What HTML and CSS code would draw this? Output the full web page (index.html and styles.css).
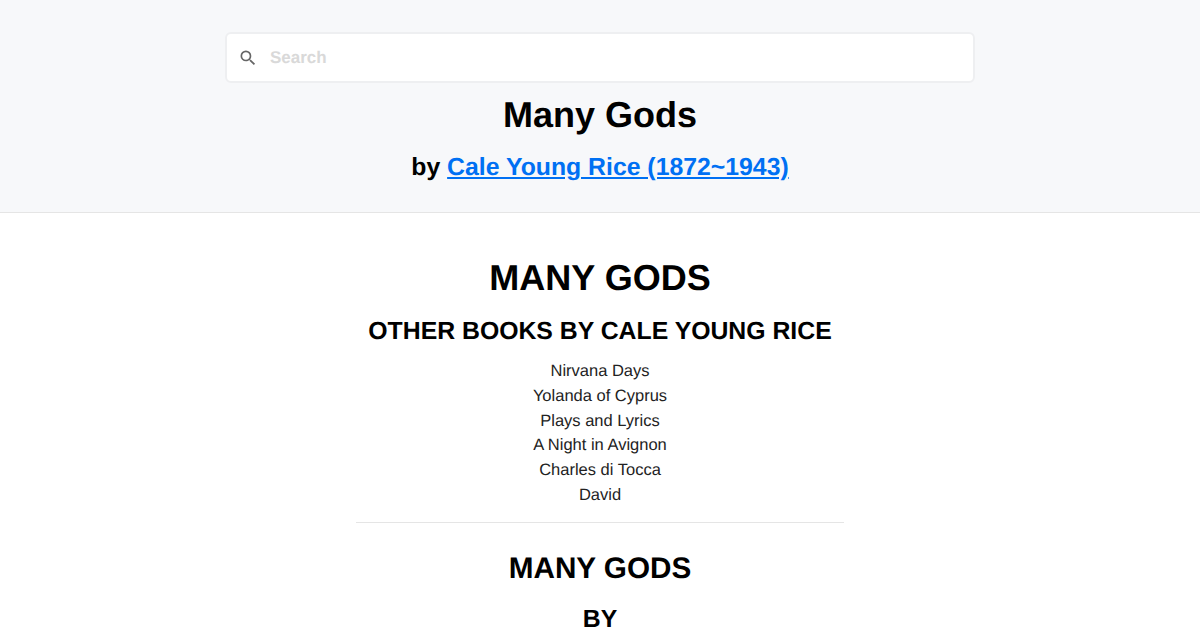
FILE: index.html
```html
<!DOCTYPE html>
<html>
<head>
    <meta charset="UTF-8">
    <meta name="viewport" content="width=device-width, initial-scale=1.0">
    <title>Many Gods</title>
    <link rel="stylesheet" href="styles.css">
</head>
<body>
    <header class="page-header">
        <div class="search-box">
            <svg class="search-icon" viewBox="0 0 24 24" width="20" height="20"><path d="M15.5 14h-.79l-.28-.27A6.47 6.47 0 0 0 16 9.5 6.5 6.5 0 1 0 9.5 16c1.61 0 3.09-.59 4.23-1.57l.27.28v.79l5 4.99L20.49 19l-4.99-5zm-6 0C7.01 14 5 11.99 5 9.5S7.01 5 9.5 5 14 7.01 14 9.5 11.99 14 9.5 14z"/></svg>
            <input class="search-input" type="text" placeholder="Search">
        </div>
        <h1 class="book-title">Many Gods</h1>
        <p class="book-author">by <a href="#">Cale Young Rice (1872~1943)</a></p>
    </header>
    <main class="book-text">
        <h1>MANY GODS</h1>
        <h2>OTHER BOOKS BY CALE YOUNG RICE</h2>
        <p class="book-list">Nirvana Days<br>Yolanda of Cyprus<br>Plays and Lyrics<br>A Night in Avignon<br>Charles di Tocca<br>David</p>
        <hr>
        <h2 class="big">MANY GODS</h2>
        <h3>BY</h3>
    </main>
</body>
</html>
```
FILE: styles.css
```css
html, body {
    height: 628px;
    overflow: hidden;
}
body {
    font-family: "Liberation Sans", Arial, sans-serif;
    margin: 0;
    padding: 0;
    background-color: white;
    color: #000;
    text-rendering: geometricPrecision;
}
.page-header {
    padding-top: 32px;
    height: 180px;
    background-color: #f7f8fa;
    border-bottom: 1px solid #e5e5e5;
    text-align: center;
}
.search-box {
    display: flex;
    align-items: center;
    width: 746px;
    height: 47px;
    margin: 0 auto;
    background-color: white;
    border: 2px solid #eeeff1;
    border-radius: 6px;
}
.search-icon {
    margin-left: 11px;
    fill: #666;
}
.search-input {
    flex: 1;
    margin-left: 10px;
    border: none;
    outline: none;
    font-family: inherit;
    font-size: 17px;
    font-weight: bold;
    background: none;
    text-rendering: geometricPrecision;
}
.search-input::placeholder {
    color: #d9d9d9;
}
.book-title {
    margin: 10px 0 0;
    font-size: 36px;
    line-height: 44px;
}
.book-author {
    margin: 15px 0 0;
    font-size: 24.8px;
    line-height: 32px;
    font-weight: bold;
}
.book-author a {
    color: #0070f3;
}
.book-text {
    width: 488px;
    margin: 0 auto;
    text-align: center;
}
.book-text h1 {
    margin: 41px 0 0;
    font-size: 36px;
    line-height: 48px;
}
.book-text h2 {
    margin: 14px 0 0;
    font-size: 24.8px;
    line-height: 32px;
}
.book-list {
    margin: 11px 0 0;
    font-size: 16.5px;
    line-height: 24.75px;
    color: #222;
}
.book-text hr {
    margin: 14px 0 0;
    border: none;
    border-top: 1px solid #e5e5e5;
}
.book-text h2.big {
    margin-top: 27px;
    font-size: 29.7px;
    line-height: 38px;
}
.book-text h3 {
    margin: 16px 0 0;
    font-size: 24.8px;
    line-height: 32px;
}
```
